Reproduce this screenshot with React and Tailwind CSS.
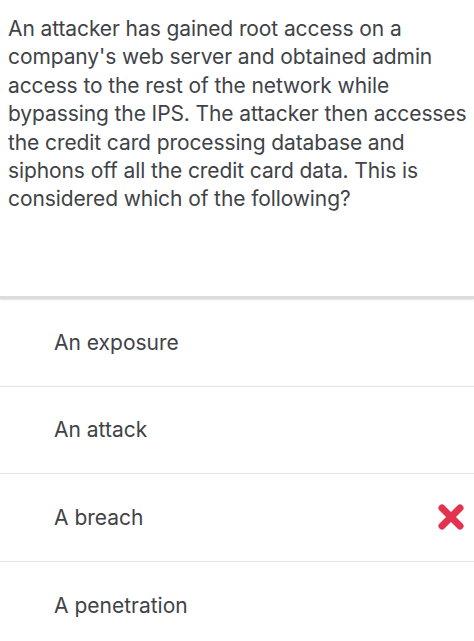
import React from "react";

const options = ["An exposure", "An attack", "A breach", "A penetration"];

const lines = [
  "An attacker has gained root access on a",
  "company's web server and obtained admin",
  "access to the rest of the network while",
  "bypassing the IPS. The attacker then accesses",
  "the credit card processing database and",
  "siphons off all the credit card data. This is",
  "considered which of the following?",
];

function XIcon() {
  return (
    <svg width="30" height="30" viewBox="0 0 30 30" className="block">
      <path d="M6 6 L24 24 M24 6 L6 24" stroke="#e3344f" strokeWidth="7" strokeLinecap="round" fill="none" />
    </svg>
  );
}

export default function App() {
  return (
    <div className="w-[474px] h-[641px] bg-white overflow-hidden text-[#3f4347]" style={{ fontFamily: "Inter, 'Open Sans', sans-serif" }}>
      <div className="h-[296px] px-2 pt-[15px]">
        <p className="text-[21px] leading-[28.4px] tracking-[-0.1px] whitespace-nowrap">
          {lines.map((l, i) => (
            <span key={i} className="block">{l}</span>
          ))}
        </p>
      </div>
      <div className="h-[3px] bg-[#dcdcdc] shadow-[0_1px_2px_rgba(0,0,0,0.12)]" />
      <div className="flex flex-col">
        {options.map((o, i) => (
          <div key={o} className={`h-[87.5px] flex items-center justify-between pl-[54px] pr-[8px] ${i < options.length - 1 ? "border-b border-[#e3e3e3]" : ""}`}>
            <span className="text-[21px]">{o}</span>
            {i === 2 && <XIcon />}
          </div>
        ))}
      </div>
    </div>
  );
}
